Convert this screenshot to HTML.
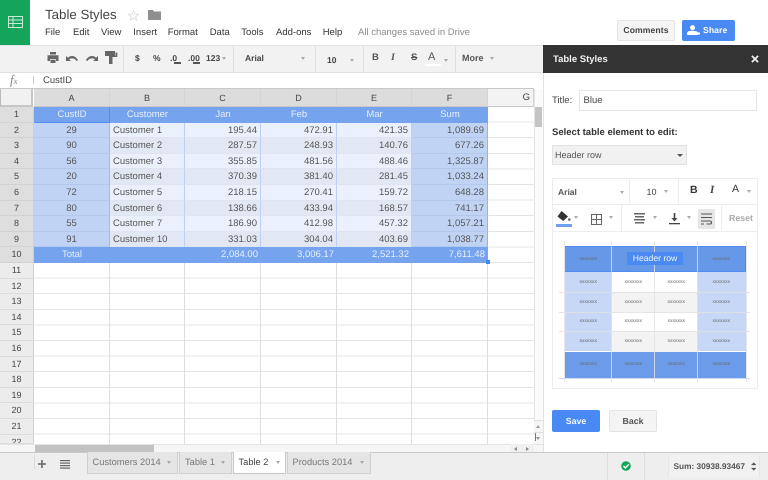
<!DOCTYPE html>
<html><head><meta charset="utf-8"><style>
*{box-sizing:border-box}
html,body{margin:0;padding:0;background:#fff}
body{width:768px;height:480px;overflow:hidden;position:relative;font-family:"Liberation Sans",Arial,sans-serif;color:#333;text-rendering:geometricPrecision}
#w{position:absolute;left:0;top:0;width:768px;height:480px;overflow:hidden;filter:blur(.35px);background:#fff}
.a{position:absolute;white-space:nowrap}
.b{font-weight:bold}
.grid{position:absolute;left:34px;top:107px;width:454px;display:grid;grid-template-columns:76px 75px 76px 76px 75px 76px;grid-auto-rows:15.6px;font-size:9.5px;line-height:16.5px;color:#555}
.grid div{padding:0 3px;overflow:hidden;white-space:nowrap;text-align:right;background:#eaf1fd;border-right:1px solid #bcd0f4;border-bottom:1px solid #dfe5f0}
.grid .e{background:#e2e8f3}
.grid .c{text-align:center;background:#c0d3f5;border-right:1px solid #9dbbf0;border-bottom:1px solid #b4c8ec}
.grid .l{text-align:left}
.grid .s{background:#c0d3f5;border-right:1px solid #8fb2f0;border-bottom:1px solid #b4c8ec}
.grid .h{background:#75a3ee;color:#e8f0fd;border:0}
.ch,.rh{position:absolute;background:#dcdcdc;color:#444;font-size:9px;text-align:center}
.ch{top:89px;height:18px;line-height:18px;border-right:1px solid #d4d4d4;border-bottom:1px solid #c8c8c8}
.rh{left:0;width:34px;height:15.6px;line-height:15px;background:#dedede;border-bottom:1px solid #d2d2d2;border-right:1px solid #cfcfcf}
.r2{background:#ececec;border-bottom:1px solid #dcdcdc}
.menu{top:26px;font-size:9.5px;color:#333;line-height:14px}
.arr{position:absolute;width:0;height:0;border-left:2.5px solid transparent;border-right:2.5px solid transparent;border-top:3px solid #aaa}
.tab{position:absolute;top:452px;height:22px;background:#e5e5e5;border:1px solid #d0d0d0;border-top:0;font-size:9.3px;color:#777;line-height:20px;padding-left:5px}
.vs{position:absolute;width:1px;background:#dedede}
.pc{position:absolute;font-size:5px;color:#666;text-align:center;line-height:5px}
.tb{font-size:8.5px;line-height:11px;color:#444;font-weight:bold}
</style></head><body><div id="w">

<!-- top bar -->
<div class="a" style="left:0;top:0;width:30px;height:45px;background:#14a55b"></div>
<svg class="a" style="left:8px;top:16px" width="15" height="12" viewBox="0 0 15 12" fill="none" stroke="#c8ecd8" stroke-width="1"><rect x="0.5" y="0.5" width="14" height="11"/><path d="M0.5 4H14.5M0.5 7.5H14.5M5 .5V11.5"/></svg>
<div class="a" style="left:45px;top:4.5px;font-size:13.3px;line-height:20px;color:#444">Table Styles</div>
<svg class="a" style="left:128px;top:9.5px" width="11" height="11" viewBox="0 0 12 12"><path d="M6 .8L7.5 4.4L11.4 4.7L8.4 7.2L9.4 11L6 9L2.6 11L3.6 7.2L.6 4.7L4.5 4.4Z" fill="none" stroke="#dadada" stroke-width=".9"/></svg>
<svg class="a" style="left:148px;top:10px" width="13" height="10" viewBox="0 0 13 10"><path d="M0 0H5L6 1.5H13V10H0Z" fill="#8f8f8f"/></svg>
<div class="a menu" style="left:45px">File</div>
<div class="a menu" style="left:73px">Edit</div>
<div class="a menu" style="left:101px">View</div>
<div class="a menu" style="left:133.3px">Insert</div>
<div class="a menu" style="left:167.7px">Format</div>
<div class="a menu" style="left:209.7px">Data</div>
<div class="a menu" style="left:241.3px">Tools</div>
<div class="a menu" style="left:276px">Add-ons</div>
<div class="a menu" style="left:322.7px">Help</div>
<div class="a menu" style="left:358px;color:#8a8a8a">All changes saved in Drive</div>
<div class="a b" style="left:617px;top:20px;width:58px;height:21px;background:#f4f4f4;border:1px solid #e4e4e4;border-radius:2px;font-size:8.6px;letter-spacing:.1px;line-height:19px;text-align:center;color:#444">Comments</div>
<div class="a b" style="left:681.5px;top:20px;width:53.5px;height:21px;background:#4889f4;border-radius:2px;font-size:8.6px;letter-spacing:.1px;line-height:21px;color:#fff;padding-left:21.5px">Share</div>
<svg class="a" style="left:687px;top:25px" width="13" height="10" viewBox="0 0 13 10" fill="#fff"><circle cx="5.5" cy="2.6" r="2.5"/><path d="M0 10V8C0 6.2 3.5 5.8 5.5 5.8S11 6.2 11 8V10Z"/><rect x="9" y="7.5" width="4" height="2"/></svg>

<!-- toolbar -->
<div class="a" style="left:0;top:45px;width:543px;height:28px;background:#f2f2f2;border-top:1px solid #e2e2e2;border-bottom:1px solid #e2e2e2"></div>
<div class="vs" style="left:123px;top:46px;height:26px"></div>
<div class="vs" style="left:233px;top:46px;height:26px"></div>
<div class="vs" style="left:315px;top:46px;height:26px"></div>
<div class="vs" style="left:362.5px;top:46px;height:26px"></div>
<div class="vs" style="left:454.5px;top:46px;height:26px"></div>
<svg class="a" style="left:0;top:0" width="130" height="70" viewBox="0 0 130 70" fill="#666">
<path d="M50 52H56V54.5H50ZM47.5 55.2H58.5V61H56V59.3H50V61H47.5ZM50.5 60H55.5V63H50.5Z"/>
<path d="M66 56V61H71L69 59.3C71.5 57.9 74.5 57.9 76.5 61L78 60.2C75.5 55.5 71 55 68 57.7Z"/>
<path d="M98 56V61H93L95 59.3C92.5 57.9 89.5 57.9 87.5 61L86 60.2C88.5 55.5 93 55 96 57.7Z"/>
<path d="M105 51H115V56H105ZM115.5 52.5H117.3V57H112.5V64H109V55.8H115.5Z"/>
</svg>
<div class="a tb" style="left:135px;top:53px">$</div>
<div class="a tb" style="left:153px;top:53px">%</div>
<div class="a tb" style="left:170px;top:53px">.0</div>
<div class="a" style="left:174px;top:62px;width:7px;height:1.5px;background:#555"></div>
<div class="a tb" style="left:188px;top:53px">.00</div>
<div class="a" style="left:193px;top:62px;width:7px;height:1.5px;background:#555"></div>
<div class="a tb" style="left:206px;top:53px">123</div>
<div class="arr" style="left:222px;top:57px"></div>
<div class="a tb" style="left:245px;top:53px">Arial</div>
<div class="arr" style="left:301px;top:57px"></div>
<div class="a tb" style="left:327px;top:55px">10</div>
<div class="arr" style="left:350px;top:59px"></div>
<div class="a b" style="left:372px;top:52px;font-size:9.5px;line-height:12px;color:#555">B</div>
<div class="a b" style="left:391px;top:52px;font-size:10px;line-height:12px;color:#555;font-style:italic;font-family:'Liberation Serif',serif">I</div>
<div class="a b" style="left:411px;top:52px;font-size:9.5px;line-height:12px;color:#555;text-decoration:line-through">S</div>
<div class="a" style="left:428px;top:51px;font-size:11px;line-height:12px;color:#555">A</div>
<div class="a" style="left:425px;top:64px;width:16px;height:2px;background:#fff"></div>
<div class="arr" style="left:444px;top:59px"></div>
<div class="a b" style="left:462px;top:52px;font-size:9px;line-height:12px;color:#555">More</div>
<div class="arr" style="left:490px;top:57px"></div>

<!-- formula bar -->
<div class="a" style="left:10px;top:72px;font-size:13px;line-height:15px;font-style:italic;font-family:'Liberation Serif',serif;color:#888">f<span style="font-size:9px">x</span></div>
<div class="a" style="left:33px;top:76px;width:1px;height:8px;background:#ccc"></div>
<div class="a" style="left:43px;top:73px;font-size:9.5px;line-height:15px;color:#444">CustID</div>
<div class="a" style="left:0;top:88px;width:534px;height:1px;background:#c8c8c8"></div>

<!-- column headers -->
<div class="a" style="left:0;top:89px;width:33px;height:18px;background:#f1f1f1;border-right:2px solid #c6c6c6;border-bottom:2px solid #c6c6c6;border-left:1px solid #bbb"></div>
<div class="ch" style="left:34px;width:76px">A</div>
<div class="ch" style="left:110px;width:75px">B</div>
<div class="ch" style="left:185px;width:76px">C</div>
<div class="ch" style="left:261px;width:76px">D</div>
<div class="ch" style="left:337px;width:75px">E</div>
<div class="ch" style="left:412px;width:76px">F</div>
<div class="ch" style="left:488px;width:46px;background:#f3f3f3;text-align:right;padding-right:3px;font-size:9.5px">G</div>

<!-- row headers -->
<div class="rh" style="top:107px">1</div>
<div class="rh" style="top:122.6px">2</div>
<div class="rh" style="top:138.2px">3</div>
<div class="rh" style="top:153.8px">4</div>
<div class="rh" style="top:169.4px">5</div>
<div class="rh" style="top:185px">6</div>
<div class="rh" style="top:200.6px">7</div>
<div class="rh" style="top:216.2px">8</div>
<div class="rh" style="top:231.8px">9</div>
<div class="rh" style="top:247.4px">10</div>
<div class="rh r2" style="top:263px">11</div>
<div class="rh r2" style="top:278.6px">12</div>
<div class="rh r2" style="top:294.2px">13</div>
<div class="rh r2" style="top:309.8px">14</div>
<div class="rh r2" style="top:325.4px">15</div>
<div class="rh r2" style="top:341px">16</div>
<div class="rh r2" style="top:356.6px">17</div>
<div class="rh r2" style="top:372.2px">18</div>
<div class="rh r2" style="top:387.8px">19</div>
<div class="rh r2" style="top:403.4px">20</div>
<div class="rh r2" style="top:419px">21</div>
<div class="rh r2" style="top:434.6px;height:9px;overflow:hidden">22</div>

<!-- empty grid area -->
<div class="a" style="left:34px;top:107px;width:500px;height:337px;background-image:repeating-linear-gradient(to bottom,transparent 0,transparent 14.6px,#e4e4e4 14.6px,#e4e4e4 15.6px)"></div>
<div class="vs" style="left:109px;top:263px;height:181px"></div>
<div class="vs" style="left:184px;top:263px;height:181px"></div>
<div class="vs" style="left:260px;top:263px;height:181px"></div>
<div class="vs" style="left:336px;top:263px;height:181px"></div>
<div class="vs" style="left:411px;top:263px;height:181px"></div>
<div class="vs" style="left:487px;top:263px;height:181px"></div>

<!-- data -->
<div class="grid">
<div class="h" style="text-align:center">CustID</div><div class="h" style="text-align:center">Customer</div><div class="h" style="text-align:center">Jan</div><div class="h" style="text-align:center">Feb</div><div class="h" style="text-align:center">Mar</div><div class="h" style="text-align:center">Sum</div>
<div class="c">29</div><div class="l">Customer 1</div><div>195.44</div><div>472.91</div><div>421.35</div><div class="s">1,089.69</div>
<div class="c">90</div><div class="l e">Customer 2</div><div class="e">287.57</div><div class="e">248.93</div><div class="e">140.76</div><div class="s">677.26</div>
<div class="c">56</div><div class="l">Customer 3</div><div>355.85</div><div>481.56</div><div>488.46</div><div class="s">1,325.87</div>
<div class="c">20</div><div class="l e">Customer 4</div><div class="e">370.39</div><div class="e">381.40</div><div class="e">281.45</div><div class="s">1,033.24</div>
<div class="c">72</div><div class="l">Customer 5</div><div>218.15</div><div>270.41</div><div>159.72</div><div class="s">648.28</div>
<div class="c">80</div><div class="l e">Customer 6</div><div class="e">138.66</div><div class="e">433.94</div><div class="e">168.57</div><div class="s">741.17</div>
<div class="c">55</div><div class="l">Customer 7</div><div>186.90</div><div>412.98</div><div>457.32</div><div class="s">1,057.21</div>
<div class="c">91</div><div class="l e">Customer 10</div><div class="e">331.03</div><div class="e">304.04</div><div class="e">403.69</div><div class="s">1,038.77</div>
<div class="h" style="text-align:center">Total</div><div class="h"></div><div class="h">2,084.00</div><div class="h">3,006.17</div><div class="h">2,521.32</div><div class="h">7,611.48</div>
</div>
<div class="a" style="left:109px;top:107px;width:1px;height:16px;background:#4d8ef0"></div>
<div class="a" style="left:34px;top:122px;width:76px;height:1px;background:#4d8ef0"></div>
<div class="a" style="left:486px;top:259.5px;width:4px;height:4px;background:#4285f4"></div>

<!-- scrollbars -->
<div class="a" style="left:534px;top:89px;width:9px;height:355px;background:#fafafa;border-left:1px solid #e4e4e4"></div>
<div class="a" style="left:535px;top:107px;width:7px;height:20px;background:#c4c4c4"></div>
<div class="a" style="left:534px;top:420px;width:9px;height:24px;background:#f6f6f6;border-top:1px solid #e0e0e0"></div>
<div class="a" style="left:534px;top:431.5px;width:9px;height:1px;background:#e0e0e0"></div>
<div class="a" style="left:534.5px;top:433px;width:1px;height:8px;background:#777"></div>
<div class="arr" style="left:536px;top:424.5px;border-top:0;border-bottom:3px solid #999"></div>
<div class="arr" style="left:536px;top:436.5px;border-top-color:#999"></div>
<div class="a" style="left:0;top:443.5px;width:543px;height:8.5px;background:#f6f6f6;border-top:1px solid #e4e4e4"></div>
<div class="a" style="left:35px;top:445px;width:119px;height:7px;background:#c2c2c2"></div>
<div class="a" style="left:510px;top:444px;width:24px;height:8px;background:#f0f0f0"></div>
<div class="a" style="left:514px;top:446.5px;width:0;height:0;border-top:2.5px solid transparent;border-bottom:2.5px solid transparent;border-right:3px solid #888"></div>
<div class="a" style="left:526px;top:446.5px;width:0;height:0;border-top:2.5px solid transparent;border-bottom:2.5px solid transparent;border-left:3px solid #888"></div>

<!-- bottom bar -->
<div class="a" style="left:0;top:452px;width:768px;height:28px;background:#eeeeee;border-top:1px solid #c8c8c8"></div>
<div class="a" style="left:34px;top:455px;width:1px;height:14px;background:#dcdcdc"></div>
<svg class="a" style="left:38px;top:460px" width="8" height="8" viewBox="0 0 8 8" fill="#666"><path d="M3.2 0H4.8V3.2H8V4.8H4.8V8H3.2V4.8H0V3.2H3.2Z"/></svg>
<svg class="a" style="left:60px;top:460px" width="10" height="9" viewBox="0 0 10 9" fill="#666"><rect y="0" width="10" height="1.2"/><rect y="2.5" width="10" height="1.2"/><rect y="5" width="10" height="1.2"/><rect y="7.5" width="10" height="1.2"/></svg>
<div class="tab" style="left:86.5px;width:91.5px">Customers 2014</div><div class="arr" style="left:167px;top:461px"></div>
<div class="tab" style="left:179px;width:53px">Table 1</div><div class="arr" style="left:221px;top:461px"></div>
<div class="tab" style="left:232.5px;width:53.5px;background:#fff;color:#444;border-color:#c8c8c8;height:21.5px">Table 2</div><div class="arr" style="left:275.5px;top:461px"></div>
<div class="tab" style="left:286.5px;width:84px">Products 2014</div><div class="arr" style="left:359.5px;top:461px"></div>
<div class="vs" style="left:606.5px;top:453px;height:27px"></div>
<div class="vs" style="left:644px;top:453px;height:27px"></div>
<svg class="a" style="left:621px;top:461px" width="10" height="10" viewBox="0 0 10 10"><circle cx="5" cy="5" r="4.8" fill="#14a55b"/><path d="M2.5 5L4.4 7L7.7 3.4" fill="none" stroke="#fff" stroke-width="1.4"/></svg>
<div class="a" style="left:667.5px;top:455px;width:92px;height:22px;background:#f1f1f1;border:1px solid #e6e6e6;border-width:0 1px;font-size:8.3px;font-weight:bold;line-height:23px;padding-left:5px;color:#555">Sum: 30938.93467</div>
<svg class="a" style="left:750.5px;top:461.5px" width="5.5" height="9" viewBox="0 0 6 9" fill="#555"><path d="M3 0L6 3H0ZM3 9L0 6H6Z"/></svg>

<!-- side panel -->
<div class="a" style="left:543px;top:45px;width:225px;height:407px;background:#fff;border-left:1px solid #e2e2e2"></div>
<div class="a" style="left:543px;top:45px;width:225px;height:28px;background:#333"></div>
<div class="a b" style="left:553px;top:52.5px;font-size:9.5px;line-height:14px;color:#f2f2f2">Table Styles</div>
<svg class="a" style="left:751px;top:55px" width="8" height="8" viewBox="0 0 9 9"><path d="M1 1L8 8M8 1L1 8" stroke="#eee" stroke-width="2"/></svg>
<div class="a" style="left:552px;top:94px;font-size:9.5px;line-height:14px;color:#444">Title:</div>
<div class="a" style="left:579px;top:90px;width:178px;height:21px;border:1px solid #e4e4e4;font-size:9.5px;line-height:20px;padding-left:3.5px;color:#444">Blue</div>
<div class="a b" style="left:552px;top:125.5px;font-size:9.5px;line-height:14px;color:#333">Select table element to edit:</div>
<div class="a" style="left:552px;top:144.5px;width:135px;height:20px;background:#f1f1f1;border:1px solid #e2e2e2;border-radius:1px;font-size:9px;line-height:19px;padding-left:2px;color:#555">Header row</div>
<div class="arr" style="left:677px;top:154px;border-top-color:#555;border-left-width:3px;border-right-width:3px"></div>

<!-- mini toolbars -->
<div class="a" style="left:552px;top:178px;width:206px;height:1px;background:#ededed"></div>
<div class="a" style="left:552px;top:204px;width:206px;height:1px;background:#ededed"></div>
<div class="a" style="left:552px;top:231px;width:206px;height:1px;background:#ededed"></div>
<div class="vs" style="left:629px;top:178px;height:26px;background:#ededed"></div>
<div class="vs" style="left:678px;top:178px;height:26px;background:#ededed"></div>
<div class="vs" style="left:621px;top:205px;height:26px;background:#ededed"></div>
<div class="vs" style="left:720.5px;top:205px;height:26px;background:#ededed"></div>
<div class="a tb" style="left:558px;top:186.5px;color:#555">Arial</div>
<div class="arr" style="left:620px;top:191px"></div>
<div class="a" style="left:646.5px;top:185.5px;font-size:9px;line-height:12px;color:#444">10</div>
<div class="arr" style="left:664px;top:190px"></div>
<div class="a b" style="left:690px;top:184px;font-size:10.5px;line-height:13px;color:#333">B</div>
<div class="a b" style="left:710px;top:184px;font-size:11px;line-height:13px;color:#444;font-style:italic;font-family:'Liberation Serif',serif">I</div>
<div class="a" style="left:732px;top:183px;font-size:10.5px;line-height:13px;color:#333">A</div>
<div class="arr" style="left:747px;top:190px"></div>
<svg class="a" style="left:557px;top:211px" width="14" height="11" viewBox="0 0 14 11" fill="#333"><path d="M4.5 0L11 5.5L6.2 10L0.5 5.5Z"/><circle cx="12.3" cy="8.5" r="1.3" fill="#666"/></svg>
<div class="a" style="left:556px;top:224px;width:16px;height:2.5px;background:#6f9fef"></div>
<div class="arr" style="left:574px;top:216px"></div>
<svg class="a" style="left:590.5px;top:213.5px" width="11" height="11" viewBox="0 0 11 11" fill="none" stroke="#666" stroke-width="1"><rect x=".5" y=".5" width="10" height="10"/><path d="M5.5 .5V10.5M.5 5.5H10.5"/></svg>
<div class="arr" style="left:609px;top:216px"></div>
<svg class="a" style="left:634px;top:213px" width="11" height="11" viewBox="0 0 11 11" fill="#666"><rect width="11" height="1.5"/><rect x="1" y="3" width="9" height="1.5"/><rect y="6" width="11" height="1.5"/><rect x="1" y="9" width="9" height="1.5"/></svg>
<div class="arr" style="left:653px;top:216px"></div>
<svg class="a" style="left:669px;top:213px" width="11" height="12" viewBox="0 0 11 12" fill="#444"><path d="M4.7 0H6.3V5H8.5L5.5 8.5L2.5 5H4.7Z"/><rect y="10" width="11" height="1.3"/></svg>
<div class="arr" style="left:687px;top:216px"></div>
<div class="a" style="left:698px;top:209px;width:17px;height:20px;background:#e6e6e6;border-radius:1px"></div>
<svg class="a" style="left:701px;top:213px" width="11" height="13" viewBox="0 0 11 13" fill="none" stroke="#555" stroke-width="1.1"><path d="M0 1H11M0 4.5H11M0 8H9C11 8 11 11 9 11H5.5M0 11H3"/></svg>
<div class="a b" style="left:729px;top:212px;font-size:8.8px;line-height:12px;color:#aaa">Reset</div>

<!-- preview table -->
<div class="a" style="left:564px;top:246px;width:182px;height:26px;background:#6698e8;border:1px solid #4d8ef0"></div>
<div class="a" style="left:564px;top:272px;width:47.5px;height:79px;background:#c6d8f6"></div>
<div class="a" style="left:697px;top:272px;width:48.5px;height:79px;background:#c6d8f6"></div>
<div class="a" style="left:611.5px;top:292px;width:85.5px;height:20px;background:#f3f3f3"></div>
<div class="a" style="left:611.5px;top:331.5px;width:85.5px;height:20px;background:#f3f3f3"></div>
<div class="a" style="left:564px;top:351.5px;width:181.5px;height:27px;background:#6c9ce9"></div>
<div class="a" style="left:563.5px;top:241px;width:1px;height:141px;background:#e6e6e6"></div>
<div class="a" style="left:611px;top:241px;width:1px;height:141px;background:#e2e2e2;opacity:.8"></div>
<div class="a" style="left:654px;top:241px;width:1px;height:141px;background:#e2e2e2;opacity:.8"></div>
<div class="a" style="left:697px;top:241px;width:1px;height:141px;background:#e2e2e2;opacity:.8"></div>
<div class="a" style="left:745.5px;top:241px;width:1px;height:141px;background:#e6e6e6"></div>
<div class="a" style="left:559px;top:291.5px;width:191px;height:1px;background:#e0e0e0;opacity:.85"></div>
<div class="a" style="left:559px;top:311.5px;width:191px;height:1px;background:#e0e0e0;opacity:.85"></div>
<div class="a" style="left:559px;top:331px;width:191px;height:1px;background:#e0e0e0;opacity:.85"></div>
<div class="a" style="left:559px;top:378px;width:191px;height:1px;background:#d0dcf0"></div>
<div class="a" style="left:627px;top:252px;width:56px;height:13px;background:#4a8af2;color:#f2f6fe;font-size:8.6px;line-height:13px;text-align:center">Header row</div>
<div class="pc" style="left:579.5px;top:256.5px">xxxxxxx</div><div class="pc" style="left:712.5px;top:256.5px">xxxxxxx</div>
<div class="pc" style="left:624.5px;top:279.5px">xxxxxxx</div><div class="pc" style="left:667.5px;top:279.5px">xxxxxxx</div><div class="pc" style="left:579.5px;top:279.5px">xxxxxxx</div><div class="pc" style="left:712.5px;top:279.5px">xxxxxxx</div>
<div class="pc" style="left:579.5px;top:299.5px">xxxxxxx</div><div class="pc" style="left:624.5px;top:299.5px">xxxxxxx</div><div class="pc" style="left:667.5px;top:299.5px">xxxxxxx</div><div class="pc" style="left:712.5px;top:299.5px">xxxxxxx</div>
<div class="pc" style="left:579.5px;top:319px">xxxxxxx</div><div class="pc" style="left:624.5px;top:319px">xxxxxxx</div><div class="pc" style="left:667.5px;top:319px">xxxxxxx</div><div class="pc" style="left:712.5px;top:319px">xxxxxxx</div>
<div class="pc" style="left:579.5px;top:339px">xxxxxxx</div><div class="pc" style="left:624.5px;top:339px">xxxxxxx</div><div class="pc" style="left:667.5px;top:339px">xxxxxxx</div><div class="pc" style="left:712.5px;top:339px">xxxxxxx</div>
<div class="pc" style="left:579.5px;top:362px">xxxxxxx</div><div class="pc" style="left:624.5px;top:362px">xxxxxxx</div><div class="pc" style="left:667.5px;top:362px">xxxxxxx</div><div class="pc" style="left:712.5px;top:362px">xxxxxxx</div>

<div class="a" style="left:552px;top:388px;width:205px;height:1px;background:#ededed"></div>
<div class="a" style="left:552px;top:178px;width:1px;height:211px;background:#ededed"></div>
<div class="a" style="left:756.5px;top:178px;width:1px;height:211px;background:#ededed"></div>

<div class="a b" style="left:552px;top:410px;width:48px;height:22px;background:#4889f4;border-radius:2px;font-size:8.8px;line-height:22px;text-align:center;color:#f4f8ff">Save</div>
<div class="a b" style="left:609px;top:410px;width:48px;height:22px;background:#f4f4f4;border:1px solid #e4e4e4;border-radius:2px;font-size:8.8px;line-height:20px;text-align:center;color:#555">Back</div>

</div></body></html>
